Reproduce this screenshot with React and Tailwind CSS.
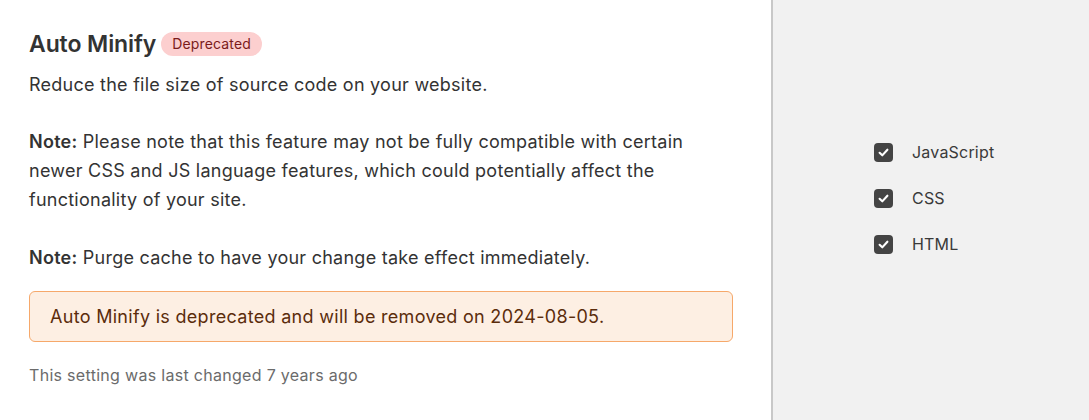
import React from "react";

function Check({ label }) {
  return (
    <div className="flex items-center h-[46px]">
      <div className="w-[19px] h-[19px] rounded-[4px] bg-[#444444] flex items-center justify-center">
        <svg width="13" height="13" viewBox="0 0 16 16" fill="none">
          <path d="M3.2 8.4 L6.5 11.5 L12.8 4.6" stroke="white" strokeWidth="2.6" strokeLinecap="round" strokeLinejoin="round" />
        </svg>
      </div>
      <span className="ml-[19px] text-[16px] tracking-[0.2px] text-[#3a3a3a]">{label}</span>
    </div>
  );
}

export default function App() {
  return (
    <div className="flex w-[1089px] h-[420px] bg-white" style={{ fontFamily: "Inter, 'Noto Sans', sans-serif" }}>
      <div className="w-[771px] shrink-0 pl-[29px] pr-[38px] pt-[29px]">
        <div className="flex items-center">
          <h2 className="text-[23px] leading-[30px] font-semibold text-[#333333] tracking-[-0.1px]">Auto Minify</h2>
          <span className="ml-[5px] rounded-full bg-[#fccfcf] text-[#7a1b1b] text-[14px] tracking-[0.15px] leading-[24px] px-[11px]">Deprecated</span>
        </div>
        <p className="mt-[11px] text-[18px] tracking-[0.25px] leading-[29px] text-[#333333]">Reduce the file size of source code on your website.</p>
        <p className="mt-[28px] text-[18px] tracking-[0.25px] leading-[29px] text-[#333333]">
          <b className="font-semibold">Note:</b> Please note that this feature may not be fully compatible with certain newer CSS and JS language features, which could potentially affect the functionality of your site.
        </p>
        <p className="mt-[29px] text-[18px] tracking-[0.25px] leading-[29px] text-[#333333]">
          <b className="font-semibold">Note:</b> Purge cache to have your change take effect immediately.
        </p>
        <div className="mt-[19px] w-[704px] h-[51px] border border-[#f6a86a] bg-[#fdefe3] rounded-[6px] flex items-center pl-[20px] text-[18px] tracking-[0.3px] text-[#5b2c0c]">
          Auto Minify is deprecated and will be removed on 2024-08-05.
        </div>
        <p className="mt-[21px] text-[16px] tracking-[0.3px] leading-[24px] text-[#6b6b6b]">This setting was last changed 7 years ago</p>
      </div>
      <div className="flex-1 bg-[#f1f1f1] border-l-2 border-[#c8c8c8] pl-[101px] pt-[129px]">
        <Check label="JavaScript" />
        <Check label="CSS" />
        <Check label="HTML" />
      </div>
    </div>
  );
}
